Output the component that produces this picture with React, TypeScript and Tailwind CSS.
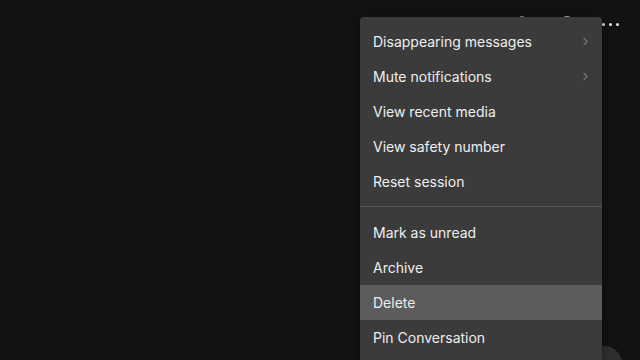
import React from 'react'
import { ChevronRight } from 'lucide-react'

type Item = { label: string; submenu?: boolean; active?: boolean } | 'sep'

const items: Item[] = [
  { label: 'Disappearing messages', submenu: true },
  { label: 'Mute notifications', submenu: true },
  { label: 'View recent media' },
  { label: 'View safety number' },
  { label: 'Reset session' },
  'sep',
  { label: 'Mark as unread' },
  { label: 'Archive' },
  { label: 'Delete', active: true },
  { label: 'Pin Conversation' },
]

const MenuRow = ({ label, submenu, active }: { label: string; submenu?: boolean; active?: boolean }) => (
  <div
    className={`flex h-[35px] items-center justify-between pl-[13px] pr-[10px] text-[14px] text-[#efefef] ${
      active ? 'bg-[#5c5c5c]' : ''
    }`}
  >
    <span>{label}</span>
    {submenu && <ChevronRight size={13} strokeWidth={1.6} className="text-[#b0b0b0]" />}
  </div>
)

export default function App() {
  return (
    <div
      className="relative h-[360px] w-[640px] overflow-hidden bg-[#121212]"
      style={{ fontFamily: 'Inter, "Noto Sans", sans-serif' }}
    >
      {/* conversation header actions (mostly covered by the menu) */}
      <div className="flex items-start justify-end pr-[21px] pt-[16px]">
        <div className="h-[14px] w-[6px] rounded-sm bg-[#9a9a9a]" />
        <div className="ml-[35px] h-[14px] w-[14px] rounded-full border-2 border-[#b8b8b8]" />
        <div className="ml-[28px] mt-[7px] flex gap-[4px]">
          <span className="h-[3px] w-[3px] rounded-full bg-[#e6e6e6]" />
          <span className="h-[3px] w-[3px] rounded-full bg-[#e6e6e6]" />
          <span className="h-[3px] w-[3px] rounded-full bg-[#e6e6e6]" />
        </div>
      </div>

      {/* scroll-down button peeking out at bottom right */}
      <div className="absolute left-[586px] top-[346px] h-[36px] w-[36px] rounded-full bg-[#2e2e2e]" />

      {/* context menu */}
      <div className="absolute left-[360px] top-[17px] w-[242px] rounded-[4px] bg-[#3b3b3b] pb-[8px] pt-[7px] shadow-[0_2px_8px_rgba(0,0,0,0.4)]">
        {items.map((item, i) =>
          item === 'sep' ? (
            <div key={i} className="pb-[8px] pt-[7px]">
              <div className="h-px bg-[#555555]" />
            </div>
          ) : (
            <MenuRow key={i} {...item} />
          )
        )}
      </div>
    </div>
  )
}
